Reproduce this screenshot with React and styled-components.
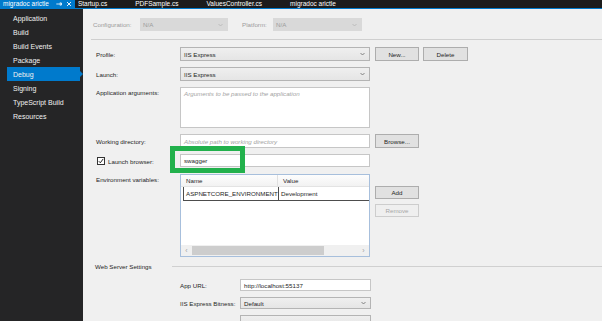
import React from 'react';
import styled, { createGlobalStyle } from 'styled-components';

const GlobalStyle = createGlobalStyle`
  html, body { margin: 0; padding: 0; }
  body {
    font-family: "Liberation Sans", Arial, sans-serif;
    background: #f0f0f0;
  }
`;

const Chevron = ({ color = '#6a6a6a' }) => (
  <svg width="5" height="4" viewBox="0 0 5 4">
    <path d="M0.5 1 L2.5 3 L4.5 1" fill="none" stroke={color} strokeWidth="0.8" />
  </svg>
);

const Pin = () => (
  <svg width="6" height="6" viewBox="0 0 6 6">
    <path d="M1 3 H4.2 M4.2 1.6 V4.4 M4.2 2 H5.5 V4 H4.2 M0.3 3 H1" fill="none" stroke="#fff" strokeWidth="0.8" />
  </svg>
);

const Close = () => (
  <svg width="6" height="6" viewBox="0 0 6 6">
    <path d="M1 1 L5 5 M5 1 L1 5" stroke="#fff" strokeWidth="0.9" />
  </svg>
);

const Check = () => (
  <svg width="6" height="6" viewBox="0 0 6 6">
    <path d="M0.8 3.2 L2.3 4.8 L5.2 0.9" fill="none" stroke="#222" strokeWidth="1" />
  </svg>
);

const App = () => {
  const tabs = ['Startup.cs', 'PDFSample.cs', 'ValuesController.cs', 'migradoc arictle'];
  const pages = ['Application', 'Build', 'Build Events', 'Package', 'Debug', 'Signing', 'TypeScript Build', 'Resources'];

  return (
    <Frame>
      <GlobalStyle />
      <TabBar>
        <Tab $active>
          migradoc arictle
          <TabIcons><Pin /><Close /></TabIcons>
        </Tab>
        {tabs.map((t) => <Tab key={t}>{t}</Tab>)}
      </TabBar>
      <Main>
        <Sidebar>
          {pages.map((p) => (
            <NavItem key={p} $selected={p === 'Debug'}>{p}</NavItem>
          ))}
        </Sidebar>
        <Content>
          <ConfigBar>
            <ConfigLabel $w={47}>Configuration:</ConfigLabel>
            <DisabledSelect $w={88}>N/A<Chevron color="#b5b5b5" /></DisabledSelect>
            <ConfigLabel $w={31} $gap={14}>Platform:</ConfigLabel>
            <DisabledSelect $w={89}>N/A<Chevron color="#b5b5b5" /></DisabledSelect>
          </ConfigBar>
          <Rule />

          <Form>
            <Label>Profile:</Label>
            <Select>IIS Express<Chevron /></Select>
            <ButtonRow>
              <Button>New...</Button>
              <Button $w={45}>Delete</Button>
            </ButtonRow>

            <Label>Launch:</Label>
            <Select>IIS Express<Chevron /></Select>
            <span />

            <Label $top>Application arguments:</Label>
            <TextArea><Placeholder>Arguments to be passed to the application</Placeholder></TextArea>
            <span />

            <Label>Working directory:</Label>
            <Input><Placeholder>Absolute path to working directory</Placeholder></Input>
            <ButtonRow><Button>Browse...</Button></ButtonRow>

            <Label>
              <CheckBox><Check /></CheckBox>
              Launch browser:
            </Label>
            <Marked>
              <Input $h={13}>swagger</Input>
              <Highlight />
            </Marked>
            <span />

            <Label $top>Environment variables:</Label>
            <EnvGrid>
              <GridHeader>
                <HeadCell>Name</HeadCell>
                <HeadCell $last>Value</HeadCell>
              </GridHeader>
              <GridRow>
                <RowCell>ASPNETCORE_ENVIRONMENT</RowCell>
                <RowCell $last>Development</RowCell>
              </GridRow>
              <GridFill />
              <HScroll>
                <ScrollArrow>&lsaquo;</ScrollArrow>
                <ScrollTrack><ScrollThumb /></ScrollTrack>
                <ScrollArrow>&rsaquo;</ScrollArrow>
              </HScroll>
            </EnvGrid>
            <SideButtons>
              <Button $h={13}>Add</Button>
              <Button $h={13} disabled>Remove</Button>
            </SideButtons>
          </Form>

          <SectionHead>
            <SectionTitle>Web Server Settings</SectionTitle>
            <SectionLine />
          </SectionHead>

          <SubForm>
            <Label $h={12}>App URL:</Label>
            <Input $h={12}>http://localhost:55137</Input>
            <Label $h={12}>IIS Express Bitness:</Label>
            <Select $h={12}>Default<Chevron /></Select>
            <span />
            <Select $h={12} />
          </SubForm>
        </Content>
      </Main>
    </Frame>
  );
};

const Frame = styled.div`
  width: 602px;
  height: 321px;
  overflow: hidden;
  display: flex;
  flex-direction: column;
  background: #f0f0f0;
`;

const TabBar = styled.div`
  height: 8px;
  flex-shrink: 0;
  display: flex;
  background: #1c1c1c;
  border-bottom: 1px solid #007acc;
`;

const Tab = styled.div`
  display: flex;
  align-items: center;
  padding: ${(p) => (p.$active ? '0 3px' : '0 25px 0 3px')};
  background: ${(p) => (p.$active ? '#007acc' : 'transparent')};
  color: #ffffff;
  font-size: 6.5px;
  line-height: 8px;
  white-space: nowrap;
`;

const TabIcons = styled.span`
  display: flex;
  align-items: center;
  gap: 4px;
  margin-left: 7px;
`;

const Main = styled.div`
  flex: 1;
  display: flex;
  min-height: 0;
`;

const Sidebar = styled.div`
  width: 83px;
  flex-shrink: 0;
  background: #252526;
  padding-top: 2px;
  box-sizing: border-box;
`;

const NavItem = styled.div`
  position: relative;
  height: 14px;
  display: flex;
  align-items: center;
  box-sizing: border-box;
  color: #f1f1f1;
  font-size: 7px;
  padding-left: ${(p) => (p.$selected ? '6px' : '13px')};
  margin-left: ${(p) => (p.$selected ? '7px' : '0')};
  width: ${(p) => (p.$selected ? '73px' : 'auto')};
  background: ${(p) => (p.$selected ? '#007acc' : 'transparent')};

  &::after {
    content: '';
    display: ${(p) => (p.$selected ? 'block' : 'none')};
    position: absolute;
    right: -3px;
    top: 3.5px;
    border-left: 3px solid #007acc;
    border-top: 3.5px solid transparent;
    border-bottom: 3.5px solid transparent;
  }
`;

const Content = styled.div`
  flex: 1;
  padding-top: 9px;
  font-size: 6.2px;
  color: #1e1e1e;
`;

const ConfigBar = styled.div`
  display: flex;
  align-items: center;
  height: 13px;
  padding-left: 10px;
`;

const ConfigLabel = styled.div`
  width: ${(p) => p.$w}px;
  margin-left: ${(p) => p.$gap || 0}px;
  color: #9c9c9c;
`;

const DisabledSelect = styled.div`
  width: ${(p) => p.$w}px;
  height: 13px;
  box-sizing: border-box;
  display: flex;
  align-items: center;
  justify-content: space-between;
  padding: 0 5px 0 3px;
  background: #d9d9d9;
  color: #9c9c9c;
`;

const Rule = styled.div`
  margin: 8px 0 0 8px;
  border-top: 1px solid #cfcfcf;
`;

const Form = styled.div`
  display: grid;
  grid-template-columns: 79px 190px 1fr;
  column-gap: 5px;
  row-gap: 6px;
  margin-top: 7px;
  padding-left: 13px;
`;

const Label = styled.div`
  display: flex;
  align-items: ${(p) => (p.$top ? 'flex-start' : 'center')};
  height: ${(p) => (p.$top ? 'auto' : `${p.$h || 14}px`)};
  padding-top: ${(p) => (p.$top ? '2px' : '0')};
  white-space: nowrap;
  color: #1e1e1e;
`;

const CheckBox = styled.span`
  width: 8px;
  height: 8px;
  box-sizing: border-box;
  border: 1px solid #333;
  background: #fff;
  display: flex;
  align-items: center;
  justify-content: center;
  margin: 0 3px 0 1px;
`;

const Select = styled.div`
  height: ${(p) => p.$h || 14}px;
  box-sizing: border-box;
  display: flex;
  align-items: center;
  justify-content: space-between;
  padding: 0 4px 0 3px;
  border: 1px solid #b4b4b4;
  background: linear-gradient(#efefef, #e5e5e5);
  color: #1e1e1e;
`;

const Input = styled.div`
  height: ${(p) => p.$h || 14}px;
  box-sizing: border-box;
  display: flex;
  align-items: center;
  padding: 0 3px;
  border: 1px solid #c6c6c6;
  background: #ffffff;
`;

const TextArea = styled.div`
  height: 41px;
  box-sizing: border-box;
  padding: 2px 3px;
  border: 1px solid #c6c6c6;
  background: #ffffff;
`;

const Placeholder = styled.span`
  font-style: italic;
  color: #a3a3a3;
`;

const ButtonRow = styled.div`
  display: flex;
  gap: 4px;
  align-items: flex-start;
`;

const Button = styled.button`
  width: ${(p) => p.$w || 44}px;
  height: ${(p) => p.$h || 14}px;
  padding: 0;
  box-sizing: border-box;
  font-family: inherit;
  font-size: 6.2px;
  border: 1px solid ${(p) => (p.disabled ? '#cdcdcd' : '#adadad')};
  background: ${(p) => (p.disabled ? '#efefef' : '#e1e1e1')};
  color: ${(p) => (p.disabled ? '#a6a6a6' : '#1e1e1e')};
`;

const Marked = styled.div`
  position: relative;
`;

const Highlight = styled.div`
  position: absolute;
  left: -10px;
  top: -8px;
  width: 75px;
  height: 27px;
  box-sizing: border-box;
  border: 5px solid #22b14c;
`;

const EnvGrid = styled.div`
  height: 83px;
  box-sizing: border-box;
  display: flex;
  flex-direction: column;
  border: 1px solid #a7bfdc;
  background: #ffffff;
`;

const GridHeader = styled.div`
  display: grid;
  grid-template-columns: 97px 1fr;
  height: 11px;
  background: linear-gradient(#fdfdfd, #f2f2f2);
  border-bottom: 1px solid #e3e3e3;
`;

const HeadCell = styled.div`
  display: flex;
  align-items: center;
  padding-left: 5px;
  border-right: ${(p) => (p.$last ? 'none' : '1px solid #e0e0e0')};
`;

const GridRow = styled.div`
  display: grid;
  grid-template-columns: 95px 1fr;
  height: 13px;
  margin-left: 2px;
  border-left: 1px solid #4d4d4d;
  border-bottom: 1px solid #4d4d4d;
`;

const RowCell = styled.div`
  display: flex;
  align-items: center;
  padding-left: 2px;
  white-space: nowrap;
  overflow: hidden;
  border-right: ${(p) => (p.$last ? 'none' : '1px solid #4d4d4d')};
`;

const GridFill = styled.div`
  flex: 1;
`;

const HScroll = styled.div`
  height: 11px;
  display: flex;
  align-items: center;
  background: #f0f0f0;
`;

const ScrollArrow = styled.div`
  width: 11px;
  text-align: center;
  color: #a0a0a0;
  font-size: 7px;
`;

const ScrollTrack = styled.div`
  flex: 1;
  height: 100%;
  display: flex;
  align-items: center;
`;

const ScrollThumb = styled.div`
  width: 132px;
  height: 9px;
  background: #cdcdcd;
`;

const SideButtons = styled.div`
  display: flex;
  flex-direction: column;
  gap: 5px;
  padding-top: 12px;
`;

const SectionHead = styled.div`
  display: flex;
  align-items: center;
  height: 9px;
  margin-top: 5px;
  padding-left: 12px;
`;

const SectionTitle = styled.div`
  width: 77px;
  white-space: nowrap;
`;

const SectionLine = styled.div`
  flex: 1;
  border-top: 1px solid #d0d0d0;
`;

const SubForm = styled.div`
  display: grid;
  grid-template-columns: 60px 131px;
  row-gap: 6px;
  margin-top: 8px;
  padding-left: 97px;
`;

export default App;
